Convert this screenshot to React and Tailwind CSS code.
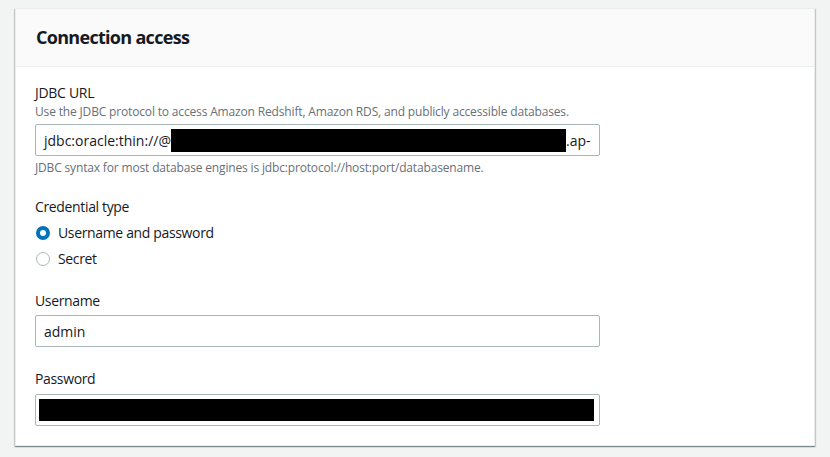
import React from "react";

function Radio({ checked, label }) {
  return (
    <div className="flex items-center h-[26px]">
      {checked ? (
        <span className="w-[14px] h-[14px] rounded-full border-[4px] border-[#0073bb] bg-white box-border" />
      ) : (
        <span className="w-[14px] h-[14px] rounded-full border border-[#aab7b8] bg-white box-border" />
      )}
      <span className="ml-[8px] text-[14px] leading-[22px] tracking-[-0.35px] text-[#16191f]">{label}</span>
    </div>
  );
}

export default function App() {
  return (
    <div
      className="w-[830px] h-[457px] bg-[#f2f3f3] pt-[8px] pl-[15px]"
      style={{ fontFamily: '"Open Sans", "Noto Sans", Arial, sans-serif' }}
    >
      <div className="w-[800px] h-[438px] bg-white border border-[#eaeded] shadow-[0_1px_1px_0_rgba(0,28,36,0.3),1px_1px_1px_0_rgba(0,28,36,0.15),-1px_1px_1px_0_rgba(0,28,36,0.15)] flex flex-col">
        <div className="h-[58px] bg-[#fafafa] border-b border-[#eaeded] flex items-center pl-[20px] pb-[2px]">
          <h2 className="text-[18px] font-bold text-[#16191f] leading-[22px] tracking-[-0.7px]">Connection access</h2>
        </div>
        <div className="pl-[19px] pt-[15px] flex flex-col">
          <div className="text-[14px] leading-[22px] tracking-[-0.3px] text-[#16191f]">JDBC URL</div>
          <div className="text-[12px] leading-[16px] tracking-[-0.16px] text-[#687078]">
            Use the JDBC protocol to access Amazon Redshift, Amazon RDS, and publicly accessible databases.
          </div>
          <div className="mt-[4px] w-[565px] h-[32px] border border-[#aab7b8] rounded-[2px] flex items-center pl-[8px] text-[14px] text-[#16191f] overflow-hidden whitespace-nowrap">
            <span>jdbc:oracle:thin://@</span>
            <span className="inline-block w-[395px] h-[23px] bg-black" />
            <span>.ap-</span>
          </div>
          <div className="mt-[4px] text-[12px] leading-[16px] tracking-[-0.16px] text-[#687078]">
            JDBC syntax for most database engines is jdbc:protocol://host:port/databasename.
          </div>
          <div className="mt-[20px] text-[14px] leading-[22px] tracking-[-0.35px] text-[#16191f]">Credential type</div>
          <div className="mt-[2px] pl-[1px] flex flex-col">
            <Radio checked label="Username and password" />
            <Radio label="Secret" />
          </div>
          <div className="mt-[18px] text-[14px] leading-[22px] tracking-[-0.35px] text-[#16191f]">Username</div>
          <div className="mt-[3px] w-[565px] h-[32px] border border-[#aab7b8] rounded-[2px] flex items-center pl-[8px] text-[14px] text-[#16191f]">
            admin
          </div>
          <div className="mt-[21px] text-[14px] leading-[22px] tracking-[-0.35px] text-[#16191f]">Password</div>
          <div className="mt-[4px] w-[565px] h-[32px] border border-[#aab7b8] rounded-[2px] flex items-center pl-[3px]">
            <span className="inline-block w-[555px] h-[22px] bg-black" />
          </div>
        </div>
      </div>
    </div>
  );
}
